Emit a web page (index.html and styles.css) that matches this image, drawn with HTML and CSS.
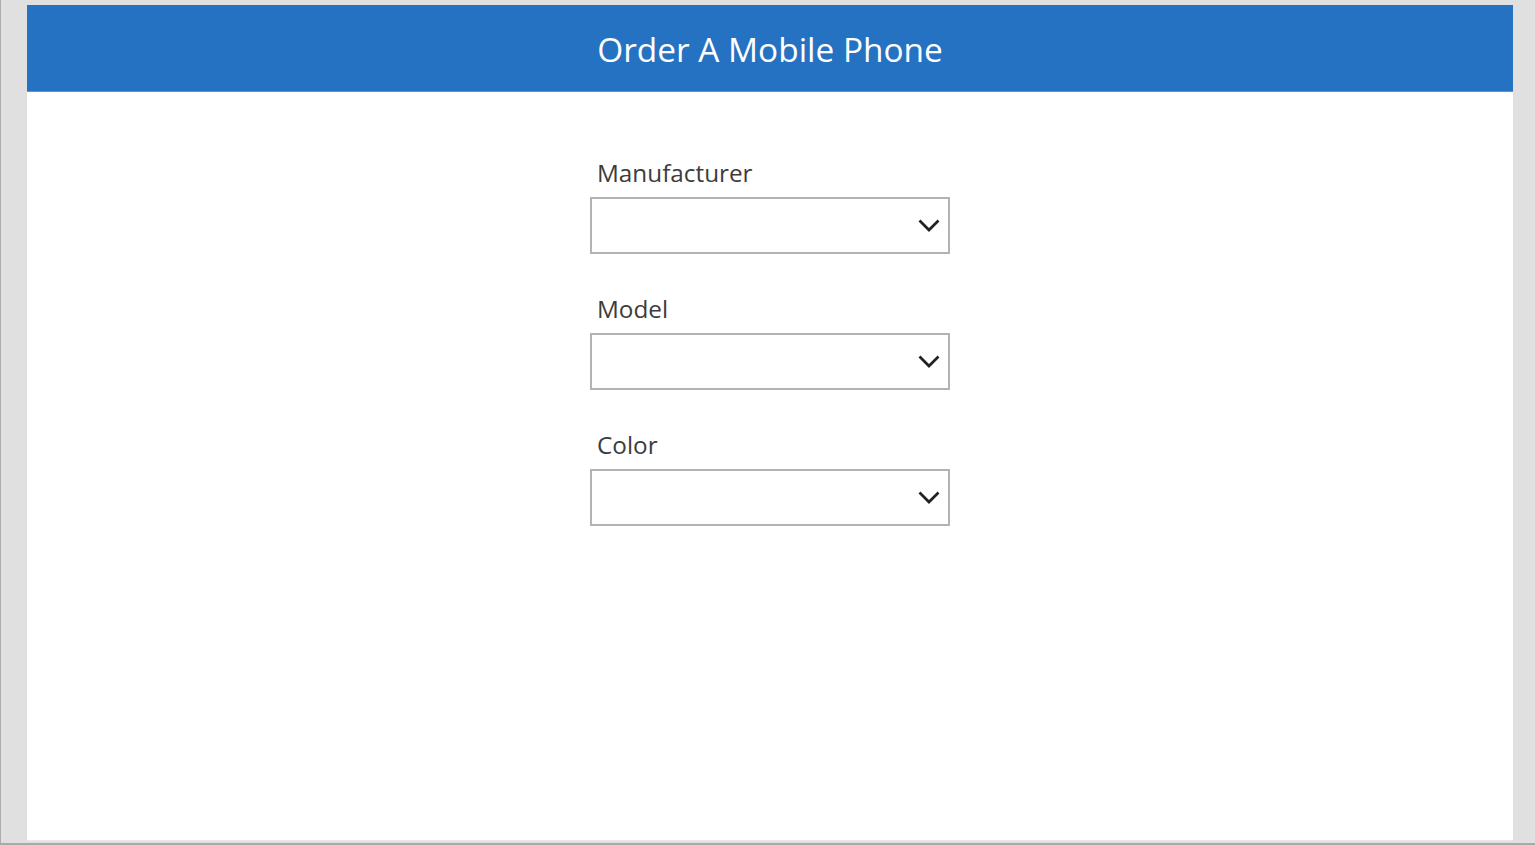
FILE: index.html
```html
<!DOCTYPE html>
<html lang="en">
<head>
<meta charset="utf-8">
<title>Order A Mobile Phone</title>
<link rel="stylesheet" href="styles.css">
</head>
<body>
<div class="frame">
  <div class="canvas">
    <header class="header">
      <h1 class="title">Order A Mobile Phone</h1>
    </header>
    <main class="form">
      <div class="field">
        <label class="label">Manufacturer</label>
        <div class="select">
          <svg class="chev" viewBox="0 0 22 13" width="22" height="13"><path d="M1.5 1.5 L11 11 L20.5 1.5" fill="none" stroke="#222" stroke-width="2.8"/></svg>
        </div>
      </div>
      <div class="field">
        <label class="label">Model</label>
        <div class="select">
          <svg class="chev" viewBox="0 0 22 13" width="22" height="13"><path d="M1.5 1.5 L11 11 L20.5 1.5" fill="none" stroke="#222" stroke-width="2.8"/></svg>
        </div>
      </div>
      <div class="field">
        <label class="label">Color</label>
        <div class="select">
          <svg class="chev" viewBox="0 0 22 13" width="22" height="13"><path d="M1.5 1.5 L11 11 L20.5 1.5" fill="none" stroke="#222" stroke-width="2.8"/></svg>
        </div>
      </div>
    </main>
  </div>
</div>
</body>
</html>
```

FILE: styles.css
```css
html, body {
  margin: 0;
  padding: 0;
  background: #e0e0e0;
}
.frame {
  box-sizing: border-box;
  width: 1535px;
  height: 845px;
  border-left: 1px solid #acacac;
  border-bottom: 2px solid #a9a9a9;
  padding: 5px 0 0 26px;
  overflow: hidden;
}
.canvas {
  width: 1486px;
  height: 835px;
  background: #ffffff;
  border-bottom: 1px solid #ebebeb;
  font-family: "Open Sans", "Noto Sans", sans-serif;
}
.header {
  height: 86px;
  background: #2672c2;
  border-bottom: 1px solid #5b95d2;
  display: flex;
  align-items: center;
  justify-content: center;
}
.title {
  margin: 0;
  padding-top: 2px;
  font-weight: 400;
  font-size: 33.4px;
  color: #ffffff;
}
.form {
  width: 360px;
  margin: 0 auto;
  padding-top: 65px;
  display: flex;
  flex-direction: column;
  gap: 39px;
}
.field {
  display: flex;
  flex-direction: column;
}
.label {
  font-size: 24.3px;
  line-height: 30px;
  color: #3c3c3c;
  padding-left: 7px;
  padding-top: 1px;
  margin-bottom: 9px;
}
.select {
  box-sizing: border-box;
  height: 57px;
  border: 2px solid #b3b3b3;
  display: flex;
  align-items: center;
  justify-content: flex-end;
  padding-right: 8px;
}
.chev {
  display: block;
}
```
